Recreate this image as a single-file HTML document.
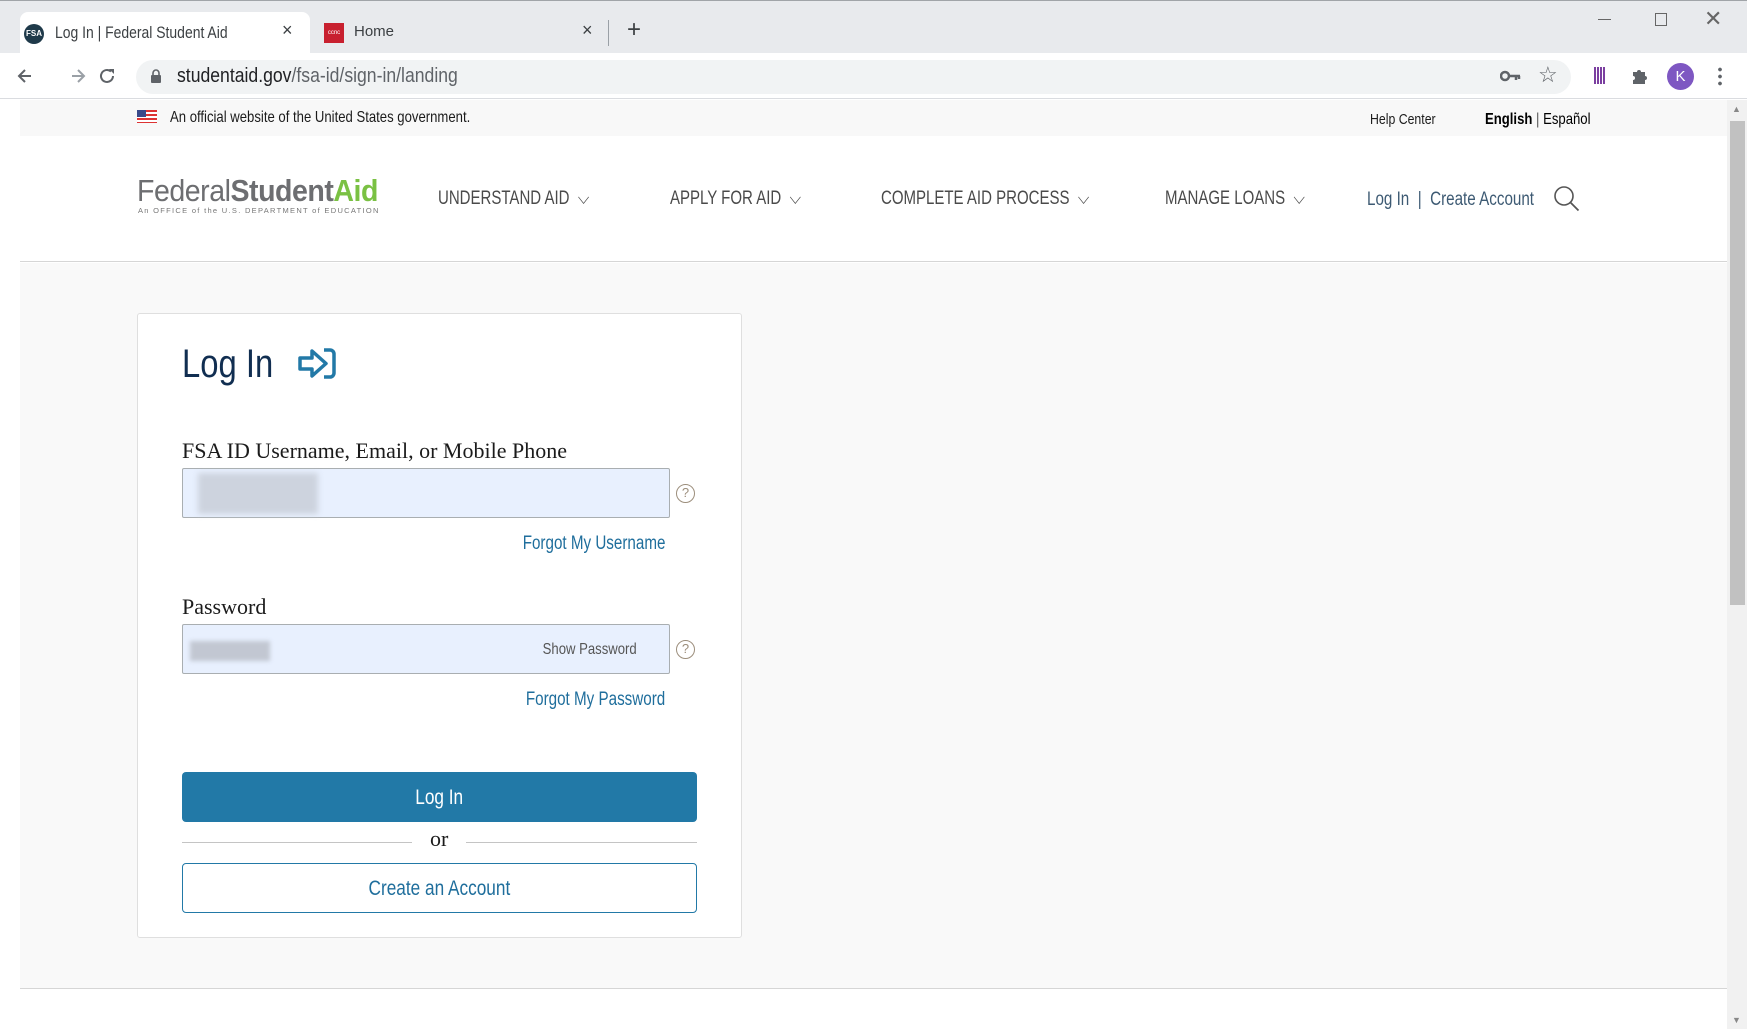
<!DOCTYPE html>
<html><head><meta charset="utf-8">
<style>
*{box-sizing:border-box;margin:0;padding:0}
body{width:1747px;height:1029px;overflow:hidden;position:relative;font-family:"Liberation Sans",sans-serif;background:#fff}
.a{position:absolute;white-space:nowrap}
.n{display:inline-block;transform:scaleX(.82);transform-origin:left center}
.nr{display:inline-block;transform:scaleX(.82);transform-origin:right center}
.nc{display:inline-block;transform:scaleX(.82);transform-origin:center center}
.serif{font-family:"Liberation Serif",serif}
</style></head><body>
<!-- tab strip -->
<div class="a" style="left:0;top:0;width:1747px;height:53px;background:#e8eaed;border-top:1px solid #a0a4a8"></div>
<div class="a" style="left:20px;top:12px;width:290px;height:41px;background:#fff;border-radius:8px 8px 0 0"></div>
<div class="a" style="left:24px;top:24px;width:20px;height:20px;border-radius:50%;background:#1f3a4a;color:#fff;font-size:8px;line-height:20px;text-align:center;font-weight:bold">FSA</div>
<div class="a" style="left:55px;top:23px;font-size:17px;color:#3c4043"><span class="n">Log In | Federal Student Aid</span></div>
<div class="a" style="left:282px;top:20px;font-size:18px;color:#3c4043">×</div>
<div class="a" style="left:324px;top:23px;width:20px;height:20px;background:#c8202f;color:#fff;font-size:6px;line-height:20px;text-align:center">ccnc</div>
<div class="a" style="left:354px;top:23px;font-size:15px;color:#3c4043">Home</div>
<div class="a" style="left:582px;top:20px;font-size:18px;color:#3c4043">×</div>
<div class="a" style="left:608px;top:20px;width:1px;height:26px;background:#9aa0a6"></div>
<div class="a" style="left:627px;top:16px;font-size:24px;color:#3c4043">+</div>
<div class="a" style="left:1598px;top:19px;width:13px;height:1px;background:#666"></div>
<div class="a" style="left:1655px;top:13px;width:12px;height:13px;border:1px solid #666"></div>
<div class="a" style="left:1704px;top:6px;font-size:22px;color:#666;font-weight:100">✕</div>
<!-- toolbar -->
<div class="a" style="left:0;top:53px;width:1747px;height:46px;background:#fff;border-bottom:1px solid #dadce0"></div>
<svg class="a" style="left:16px;top:66px" width="90" height="20" viewBox="0 0 90 20"><path d="M15 10H3M9 4L3 10l6 6" stroke="#5f6368" stroke-width="2" fill="none"/><path d="M56 10h12M62 4l6 6-6 6" stroke="#9aa0a6" stroke-width="2" fill="none"/></svg>
<svg class="a" style="left:97px;top:66px" width="20" height="20" viewBox="0 0 20 20"><path d="M16 10a6 6 0 1 1-2-4.5" stroke="#5f6368" stroke-width="2" fill="none"/><path d="M12 3h5v5z" fill="#5f6368"/></svg>
<div class="a" style="left:136px;top:60px;width:1435px;height:34px;background:#f1f3f4;border-radius:17px"></div>
<svg class="a" style="left:150px;top:69px" width="12" height="15" viewBox="0 0 12 15"><rect x="1" y="6" width="10" height="8" rx="1" fill="#5f6368"/><path d="M3 6V4a3 3 0 0 1 6 0v2" stroke="#5f6368" stroke-width="1.6" fill="none"/></svg>
<div class="a" style="left:177px;top:65px;font-size:20px;color:#202124"><span class="n" style="transform:scaleX(.88)">studentaid.gov<span style="color:#5f6368">/fsa-id/sign-in/landing</span></span></div>
<svg class="a" style="left:1500px;top:68px" width="22" height="16" viewBox="0 0 22 16"><circle cx="5" cy="8" r="4" stroke="#5f6368" stroke-width="2.5" fill="none"/><path d="M9 8h11M16 8v4M19 8v3" stroke="#5f6368" stroke-width="2.5"/></svg>
<div class="a" style="left:1538px;top:62px;font-size:22px;color:#5f6368">☆</div>
<div class="a" style="left:1594px;top:67px;width:12px;height:17px;background:repeating-linear-gradient(90deg,#7b3fa0 0 2px,#fff 2px 3px)"></div>
<svg class="a" style="left:1630px;top:66px" width="20" height="20" viewBox="0 0 20 20"><path d="M3 6h4a2 2 0 1 1 4 0h4v4a2 2 0 1 1 0 4v4H3v-4a2 2 0 1 0 0-4z" fill="#5f6368"/></svg>
<div class="a" style="left:1667px;top:63px;width:27px;height:27px;border-radius:50%;background:#7e57c2;color:#fff;font-size:15px;line-height:27px;text-align:center">K</div>
<div class="a" style="left:1718px;top:66px;width:4px;height:20px;background:radial-gradient(circle,#5f6368 1.7px,transparent 2px) 0 0/4px 7px"></div>
<!-- gov banner -->
<div class="a" style="left:20px;top:100px;width:1707px;height:36px;background:#f8f8f8"></div>
<div class="a" style="left:137px;top:110px;width:20px;height:13px;background:repeating-linear-gradient(#d33 0 2px,#fff 2px 4px)"><div style="width:9px;height:7px;background:#3a4a8a"></div></div>
<div class="a" style="left:170px;top:109px;font-size:16px;color:#1b1b1b"><span class="n">An official website of the United States government.</span></div>
<div class="a" style="left:1370px;top:111px;font-size:15px;color:#1b1b1b"><span class="n">Help Center</span></div>
<div class="a" style="left:1485px;top:111px;font-size:16px;color:#000"><span class="n"><b style="font-weight:600">English</b> <span style="color:#555">|</span> Español</span></div>
<!-- header -->
<div class="a" style="left:20px;top:136px;width:1707px;height:126px;background:#fff;border-bottom:1px solid #d6d6d6"></div>
<div class="a" style="left:137px;top:173px;font-size:31px;letter-spacing:-0.5px;color:#6d6e71"><span class="n" style="transform:scaleX(.92)">Federal<b style="color:#6d6e71">Student</b><b style="color:#7ac143">Aid</b></span></div>
<div class="a" style="left:138px;top:206px;font-size:7.5px;letter-spacing:1.3px;color:#777">An OFFICE of the U.S. DEPARTMENT of EDUCATION</div>
<div class="a" style="left:438px;top:188px;font-size:19px;color:#4a4a4a"><span class="n" style="transform:scaleX(.79)">UNDERSTAND AID &nbsp;⌵</span></div>
<div class="a" style="left:670px;top:188px;font-size:19px;color:#4a4a4a"><span class="n" style="transform:scaleX(.79)">APPLY FOR AID &nbsp;⌵</span></div>
<div class="a" style="left:881px;top:188px;font-size:19px;color:#4a4a4a"><span class="n" style="transform:scaleX(.79)">COMPLETE AID PROCESS &nbsp;⌵</span></div>
<div class="a" style="left:1165px;top:188px;font-size:19px;color:#4a4a4a"><span class="n" style="transform:scaleX(.79)">MANAGE LOANS &nbsp;⌵</span></div>
<div class="a" style="left:1367px;top:189px;font-size:19px;color:#3d5a73"><span class="n" style="transform:scaleX(.8)">Log In &nbsp;| &nbsp;Create Account</span></div>
<svg class="a" style="left:1553px;top:185px" width="28" height="28" viewBox="0 0 28 28"><circle cx="11" cy="11" r="9" stroke="#555" stroke-width="1.6" fill="none"/><path d="M17.5 17.5l8 8" stroke="#555" stroke-width="1.8"/></svg>
<!-- main bg -->
<div class="a" style="left:20px;top:263px;width:1707px;height:726px;background:#f9f9f9;border-bottom:1px solid #d6d6d6"></div>
<!-- card -->
<div class="a" style="left:137px;top:313px;width:605px;height:625px;background:#fff;border:1px solid #dfdfdf;border-radius:3px"></div>
<div class="a" style="left:182px;top:342px;font-size:40px;color:#112e51;font-weight:500"><span class="n">Log In</span></div>
<svg class="a" style="left:297px;top:347px" width="40" height="33" viewBox="0 0 40 33"><path d="M3 11h12V4l14 12.5L15 29v-7H3z" stroke="#2279a7" stroke-width="3.5" fill="none" stroke-linejoin="round"/><path d="M27 3h6a4 4 0 0 1 4 4v19a4 4 0 0 1-4 4h-6" stroke="#2279a7" stroke-width="3.5" fill="none"/></svg>
<div class="a serif" style="left:182px;top:438px;font-size:22px;color:#1b1b1b">FSA ID Username, Email, or Mobile Phone</div>
<div class="a" style="left:182px;top:468px;width:488px;height:50px;background:#e8f0fe;border:1px solid #a9aeb1;border-radius:2px"></div>
<div class="a" style="left:198px;top:473px;width:120px;height:41px;background:#cdd3de;filter:blur(3px)"></div>
<div class="a" style="left:676px;top:484px;width:19px;height:19px;border:1.5px solid #9c8e7c;border-radius:50%;font-size:13px;line-height:16px;text-align:center;color:#9c8e7c">?</div>
<div class="a" style="right:1082px;top:533px;font-size:19px;color:#1f6e9c"><span class="nr" style="transform:scaleX(.8)">Forgot My Username</span></div>
<div class="a serif" style="left:182px;top:594px;font-size:22px;color:#1b1b1b">Password</div>
<div class="a" style="left:182px;top:624px;width:488px;height:50px;background:#e8f0fe;border:1px solid #a9aeb1;border-radius:2px"></div>
<div class="a" style="left:190px;top:641px;width:80px;height:20px;background:#c2c7d2;filter:blur(2px)"></div>
<div class="a" style="right:1110px;top:641px;font-size:16px;color:#555"><span class="nr">Show Password</span></div>
<div class="a" style="left:676px;top:640px;width:19px;height:19px;border:1.5px solid #9c8e7c;border-radius:50%;font-size:13px;line-height:16px;text-align:center;color:#9c8e7c">?</div>
<div class="a" style="right:1082px;top:689px;font-size:19px;color:#1f6e9c"><span class="nr" style="transform:scaleX(.8)">Forgot My Password</span></div>
<div class="a" style="left:182px;top:772px;width:515px;height:50px;background:#2279a7;border-radius:4px;color:#fff;font-size:21px;line-height:52px;text-align:center"><span class="nc">Log In</span></div>
<div class="a" style="left:182px;top:842px;width:230px;height:1px;background:#c4c4c4"></div>
<div class="a" style="left:466px;top:842px;width:231px;height:1px;background:#c4c4c4"></div>
<div class="a serif" style="left:430px;top:826px;font-size:22px;color:#1b1b1b">or</div>
<div class="a" style="left:182px;top:863px;width:515px;height:50px;background:#fff;border:1.5px solid #2279a7;border-radius:4px;color:#1f6e9c;font-size:21px;line-height:49px;text-align:center"><span class="nc">Create an Account</span></div>
<!-- scrollbar -->
<div class="a" style="left:1727px;top:100px;width:20px;height:929px;background:#f1f1f1"></div>
<div class="a" style="left:1730px;top:121px;width:15px;height:484px;background:#c1c1c1"></div>
<div class="a" style="left:1732px;top:104px;font-size:9px;color:#888">▲</div>
<div class="a" style="left:1732px;top:1015px;font-size:9px;color:#888">▼</div>
</body></html>
